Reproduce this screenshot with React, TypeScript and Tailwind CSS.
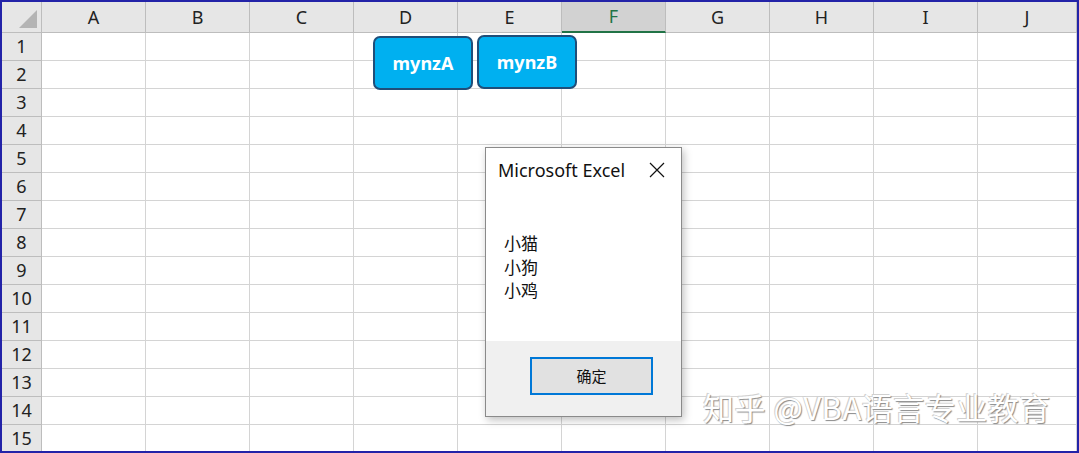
import React from "react";

const cols = ["A", "B", "C", "D", "E", "F", "G", "H", "I", "J"];
const rows = Array.from({ length: 15 }, (_, i) => i + 1);

const App: React.FC = () => {
  return (
    <div className="relative h-[453px] w-[1079px] overflow-hidden border-2 border-[#2323a8] bg-white font-['Noto_Sans','Noto_Sans_CJK_SC',sans-serif]">
      {/* Sheet grid */}
      <div className="grid grid-cols-[40px_repeat(9,104px)_1fr] grid-rows-[31px_repeat(15,28px)]">
        {/* corner */}
        <div className="relative border-r border-b border-[#bdbdbd] bg-[#e6e6e6]">
          <div className="absolute right-[4px] bottom-[4px] h-0 w-0 border-b-[18px] border-l-[18px] border-b-[#b4b4b4] border-l-transparent" />
        </div>
        {cols.map((c) => (
          <div
            key={c}
            className={
              c === "F"
                ? "flex items-center justify-center border-r border-b-2 border-r-[#bdbdbd] border-b-[#217346] bg-[#d2d2d2] text-[18px] text-[#217346]"
                : "flex items-center justify-center border-r border-b border-[#bdbdbd] bg-[#e6e6e6] text-[18px] text-[#222]"
            }
          >
            {c}
          </div>
        ))}
        {rows.map((r) => (
          <React.Fragment key={r}>
            <div className="flex items-center justify-center border-r border-b border-[#bdbdbd] bg-[#e6e6e6] text-[18px] text-[#222]">
              {r}
            </div>
            {cols.map((c) => (
              <div key={c} className="border-r border-b border-[#d4d4d4]" />
            ))}
          </React.Fragment>
        ))}
      </div>

      {/* Shape buttons */}
      <div className="absolute left-[371px] top-[34px] flex h-[54px] w-[100px] items-center justify-center rounded-[7px] border-2 border-[#1f4e79] bg-[#00b0f0] text-[18px] font-bold text-white">
        mynzA
      </div>
      <div className="absolute left-[475px] top-[33px] flex h-[54px] w-[100px] items-center justify-center rounded-[7px] border-2 border-[#1f4e79] bg-[#00b0f0] text-[18px] font-bold text-white">
        mynzB
      </div>

      {/* Message box */}
      <div className="absolute left-[483px] top-[145px] flex h-[270px] w-[197px] flex-col border border-[#8a8a8a] bg-white shadow-[2px_3px_8px_rgba(0,0,0,0.25)]">
        <div className="flex h-[44px] items-center justify-between pl-[12px] pr-[16px]">
          <span className="text-[18px] text-[#111]">Microsoft Excel</span>
          <svg width="16" height="16" viewBox="0 0 16 16">
            <path d="M1 1L15 15M15 1L1 15" stroke="#111" strokeWidth="1.2" />
          </svg>
        </div>
        <div className="flex flex-1 flex-col pl-[18px] pt-[39px] font-['Noto_Sans_CJK_SC',sans-serif] text-[17px] leading-[23.5px] text-[#111]">
          <span>小猫</span>
          <span>小狗</span>
          <span>小鸡</span>
        </div>
        <div className="flex h-[75px] items-start bg-[#f0f0f0] pl-[44px] pt-[16px]">
          <div className="flex h-[38px] w-[123px] items-center justify-center border-2 border-[#0078d7] bg-[#e1e1e1] font-['Noto_Sans_CJK_SC',sans-serif] text-[15px] text-[#111]">
            确定
          </div>
        </div>
      </div>

      {/* Watermark */}
      <div className="absolute left-[701px] top-[387px] font-['Noto_Sans_CJK_SC',sans-serif] text-[31px] leading-[36px] tracking-[0.5px] text-white [text-shadow:1px_1px_1px_#8a8a8a,-1px_-1px_0_#d0d0d0]">
        知乎 @VBA语言专业教育
      </div>
    </div>
  );
};

export default App;
